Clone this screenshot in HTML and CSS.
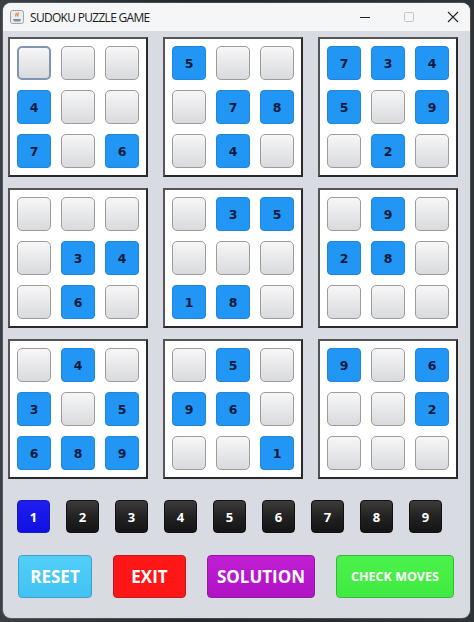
FILE: index.html
```html
<!DOCTYPE html>
<html>
<head>
<meta charset="utf-8">
<link rel="stylesheet" href="styles.css">
</head>
<body>
<div class="window">
  <div class="titlebar">
    <svg class="app-icon" width="14" height="14" viewBox="0 0 14 14">
      <rect x="0.5" y="0.5" width="13" height="13" rx="2" fill="#e9ecf0" stroke="#9aa3ad"/>
      <path d="M3 9 h8 l-1 2.5 h-6 z" fill="#7d8fa3"/>
      <path d="M6 3 c1 1 -1 2 0 3.5 M8 2.5 c1 1 -1 2 0 4" stroke="#e07a2e" stroke-width="1.2" fill="none"/>
    </svg>
    <span class="title">SUDOKU PUZZLE GAME</span>
    <div class="controls">
      <svg class="ctl" width="12" height="12" viewBox="0 0 12 12"><path d="M1 6.5 H11" stroke="#222" stroke-width="1"/></svg>
      <svg class="ctl" width="12" height="12" viewBox="0 0 12 12"><rect x="1.5" y="1.5" width="9" height="9" rx="1" fill="none" stroke="#c4c4c4" stroke-width="1"/></svg>
      <svg class="ctl" width="12" height="12" viewBox="0 0 12 12"><path d="M1 1 L11 11 M11 1 L1 11" stroke="#222" stroke-width="1.1"/></svg>
    </div>
  </div>
  <div class="content">
    <div class="board">
      <div class="box">
        <div class="cell empty focus"></div><div class="cell empty"></div><div class="cell empty"></div>
        <div class="cell given">4</div><div class="cell empty"></div><div class="cell empty"></div>
        <div class="cell given">7</div><div class="cell empty"></div><div class="cell given">6</div>
      </div>
      <div class="box">
        <div class="cell given">5</div><div class="cell empty"></div><div class="cell empty"></div>
        <div class="cell empty"></div><div class="cell given">7</div><div class="cell given">8</div>
        <div class="cell empty"></div><div class="cell given">4</div><div class="cell empty"></div>
      </div>
      <div class="box">
        <div class="cell given">7</div><div class="cell given">3</div><div class="cell given">4</div>
        <div class="cell given">5</div><div class="cell empty"></div><div class="cell given">9</div>
        <div class="cell empty"></div><div class="cell given">2</div><div class="cell empty"></div>
      </div>
      <div class="box">
        <div class="cell empty"></div><div class="cell empty"></div><div class="cell empty"></div>
        <div class="cell empty"></div><div class="cell given">3</div><div class="cell given">4</div>
        <div class="cell empty"></div><div class="cell given">6</div><div class="cell empty"></div>
      </div>
      <div class="box">
        <div class="cell empty"></div><div class="cell given">3</div><div class="cell given">5</div>
        <div class="cell empty"></div><div class="cell empty"></div><div class="cell empty"></div>
        <div class="cell given">1</div><div class="cell given">8</div><div class="cell empty"></div>
      </div>
      <div class="box">
        <div class="cell empty"></div><div class="cell given">9</div><div class="cell empty"></div>
        <div class="cell given">2</div><div class="cell given">8</div><div class="cell empty"></div>
        <div class="cell empty"></div><div class="cell empty"></div><div class="cell empty"></div>
      </div>
      <div class="box">
        <div class="cell empty"></div><div class="cell given">4</div><div class="cell empty"></div>
        <div class="cell given">3</div><div class="cell empty"></div><div class="cell given">5</div>
        <div class="cell given">6</div><div class="cell given">8</div><div class="cell given">9</div>
      </div>
      <div class="box">
        <div class="cell empty"></div><div class="cell given">5</div><div class="cell empty"></div>
        <div class="cell given">9</div><div class="cell given">6</div><div class="cell empty"></div>
        <div class="cell empty"></div><div class="cell empty"></div><div class="cell given">1</div>
      </div>
      <div class="box">
        <div class="cell given">9</div><div class="cell empty"></div><div class="cell given">6</div>
        <div class="cell empty"></div><div class="cell empty"></div><div class="cell given">2</div>
        <div class="cell empty"></div><div class="cell empty"></div><div class="cell empty"></div>
      </div>
    </div>
    <div class="numbers">
      <div class="num selected">1</div>
      <div class="num">2</div>
      <div class="num">3</div>
      <div class="num">4</div>
      <div class="num">5</div>
      <div class="num">6</div>
      <div class="num">7</div>
      <div class="num">8</div>
      <div class="num">9</div>
    </div>
    <div class="actions">
      <div class="btn reset">RESET</div>
      <div class="btn exit">EXIT</div>
      <div class="btn solution">SOLUTION</div>
      <div class="btn check">CHECK MOVES</div>
    </div>
  </div>
</div>
</body>
</html>
```
FILE: styles.css
```css
html, body {
  margin: 0;
  padding: 0;
}
body {
  width: 474px;
  height: 622px;
  background: linear-gradient(90deg, #3a4044 0%, #23282c 40%, #2e3337 100%);
  padding: 3px 4px 4px 3px;
  box-sizing: border-box;
  overflow: hidden;
}
.window {
  width: 467px;
  height: 615px;
  border-radius: 8px;
  overflow: hidden;
  background: #d8dbe1;
  display: flex;
  flex-direction: column;
  box-shadow: 0 0 0 1px rgba(255,255,255,0.15);
}
.titlebar {
  height: 28px;
  flex: none;
  background: #f5f6f8;
  display: flex;
  align-items: center;
  padding-left: 7px;
}
.app-icon {
  flex: none;
  margin-right: 6px;
}
.title {
  font-family: "Open Sans", "Noto Sans", sans-serif;
  font-size: 12px;
  letter-spacing: -0.7px;
  color: #1b1b1b;
}
.controls {
  margin-left: auto;
  display: flex;
  align-items: center;
  gap: 32px;
  padding-right: 11px;
}
.ctl {
  display: block;
}
.content {
  flex: 1;
  padding: 6px 0 0 5px;
}
.board {
  display: grid;
  grid-template-columns: repeat(3, 140px);
  grid-template-rows: repeat(3, 140px);
  column-gap: 15px;
  row-gap: 11px;
}
.box {
  background: #ffffff;
  border: 2px solid #2a2a2a;
  border-top-color: #555;
  border-left-color: #555;
  box-sizing: border-box;
  padding: 7px;
  display: grid;
  grid-template-columns: repeat(3, 34px);
  grid-template-rows: repeat(3, 34px);
  column-gap: 10px;
  row-gap: 10px;
}
.cell {
  box-sizing: border-box;
  border-radius: 5px;
  display: flex;
  align-items: center;
  justify-content: center;
  font-family: "DejaVu Sans", "Liberation Sans", sans-serif;
  font-weight: bold;
  font-size: 12.5px;
  color: #0b1a3c;
}
.empty {
  background: linear-gradient(180deg, #f7f7f8 0%, #e6e7e9 55%, #d9dadd 100%);
  border: 1.5px solid #9c9c9c;
}
.focus {
  border: 2px solid #7f96b3;
}
.given {
  background: #2196f5;
  border: 1px solid #1f86dc;
  border-radius: 4px;
}
.numbers {
  display: flex;
  gap: 16px;
  padding-left: 9px;
  margin-top: 21px;
}
.num {
  width: 33px;
  height: 33px;
  box-sizing: border-box;
  border-radius: 4px;
  background: linear-gradient(180deg, #3b3b3b 0%, #222 50%, #141414 100%);
  border: 1px solid #111;
  color: #fff;
  font-family: "Open Sans", "Noto Sans", sans-serif;
  font-weight: bold;
  font-size: 13px;
  display: flex;
  align-items: center;
  justify-content: center;
}
.num.selected {
  background: linear-gradient(180deg, #1e1ef0 0%, #1010e0 100%);
  border-color: #1a1ab8;
}
.actions {
  display: flex;
  gap: 21px;
  padding-left: 10px;
  margin-top: 22px;
}
.btn {
  height: 43px;
  box-sizing: border-box;
  border-radius: 4px;
  color: #fff;
  font-family: "Open Sans", "Noto Sans", sans-serif;
  font-weight: bold;
  font-size: 17px;
  display: flex;
  align-items: center;
  justify-content: center;
  border: 1px solid rgba(0,0,0,0.25);
}
.reset {
  width: 74px;
  background: linear-gradient(180deg, #52cef8 0%, #42c3f2 100%);
  border-color: #3aa2c8;
}
.exit {
  width: 73px;
  background: #ff1717;
  border-color: #c81818;
}
.solution {
  width: 108px;
  background: linear-gradient(180deg, #c01ed4 0%, #b012c4 100%);
  border-color: #8f1aa0;
}
.check {
  width: 118px;
  font-size: 12.5px;
  background: linear-gradient(180deg, #4cf24c 0%, #40ea40 100%);
  border-color: #36b836;
}
```
